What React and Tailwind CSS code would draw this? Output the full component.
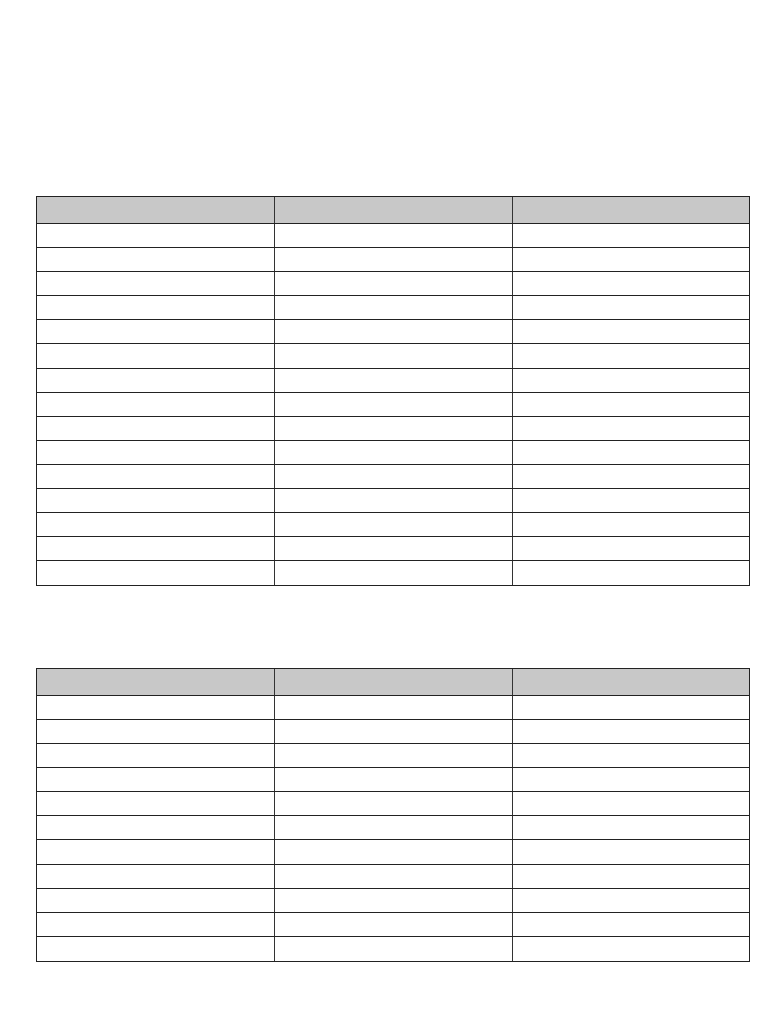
import React from "react";

function Table({ rows }) {
  return (
    <div className="ml-[36px] w-[714px] border border-[#222]">
      <div className="grid grid-cols-[238px_238px_236px] h-[27px] bg-[#c8c8c8] border-b border-[#222]">
        <div className="border-r border-[#333]" />
        <div className="border-r border-[#333]" />
        <div />
      </div>
      {Array.from({ length: rows }).map((_, i) => (
        <div
          key={i}
          className={`grid grid-cols-[238px_238px_236px] h-[24.1px] ${i < rows - 1 ? "border-b border-[#222]" : ""}`}
        >
          <div className="border-r border-[#333]" />
          <div className="border-r border-[#333]" />
          <div />
        </div>
      ))}
    </div>
  );
}

export default function App() {
  return (
    <div className="w-[768px] h-[1024px] bg-white pt-[196px]" style={{ fontFamily: '"Liberation Sans", Arial, sans-serif' }}>
      <Table rows={15} />
      <div className="h-[81.5px]" />
      <Table rows={11} />
    </div>
  );
}
